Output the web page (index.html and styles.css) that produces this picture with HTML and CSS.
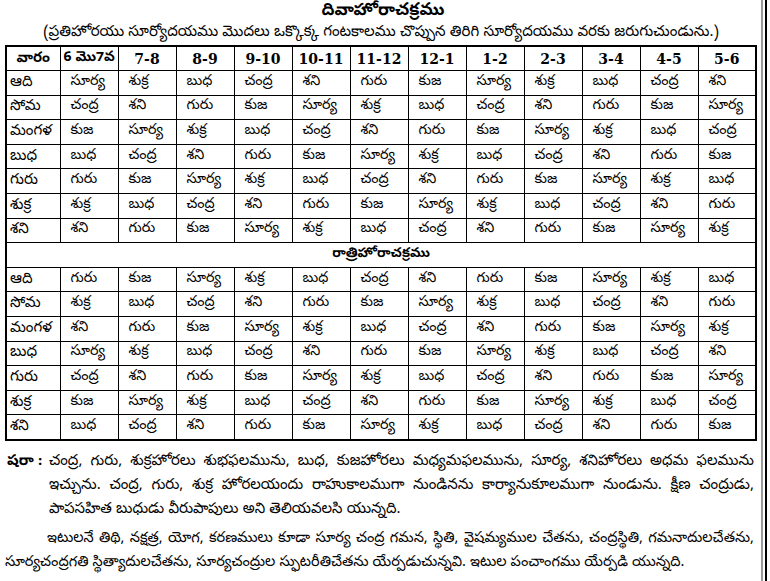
FILE: index.html
```html
<!DOCTYPE html>
<html lang="te">
<head>
<meta charset="utf-8">
<title>దివాహోరాచక్రము</title>
<link rel="stylesheet" href="styles.css">
</head>
<body>
<div class="frame">
<div class="page">
  <h1 class="title">దివాహోరాచక్రము</h1>
  <p class="subtitle">(ప్రతిహోరయు సూర్యోదయము మొదలు ఒక్కొక్క గంటకాలము చొప్పున తిరిగి సూర్యోదయము వరకు జరుగుచుండును.)</p>
  <table class="hora">
    <colgroup>
      <col class="c-day"><col><col><col><col><col><col><col><col><col><col><col><col>
    </colgroup>
    <tr class="head">
      <th class="day">వారం</th><th class="first">6 మొ7వ</th><th>7-8</th><th>8-9</th><th>9-10</th><th>10-11</th><th>11-12</th><th>12-1</th><th>1-2</th><th>2-3</th><th>3-4</th><th>4-5</th><th>5-6</th>
    </tr>
    <tr><td class="day">ఆది</td><td>సూర్య</td><td>శుక్ర</td><td>బుధ</td><td>చంద్ర</td><td>శని</td><td>గురు</td><td>కుజ</td><td>సూర్య</td><td>శుక్ర</td><td>బుధ</td><td>చంద్ర</td><td>శని</td></tr>
    <tr><td class="day">సోమ</td><td>చంద్ర</td><td>శని</td><td>గురు</td><td>కుజ</td><td>సూర్య</td><td>శుక్ర</td><td>బుధ</td><td>చంద్ర</td><td>శని</td><td>గురు</td><td>కుజ</td><td>సూర్య</td></tr>
    <tr><td class="day">మంగళ</td><td>కుజ</td><td>సూర్య</td><td>శుక్ర</td><td>బుధ</td><td>చంద్ర</td><td>శని</td><td>గురు</td><td>కుజ</td><td>సూర్య</td><td>శుక్ర</td><td>బుధ</td><td>చంద్ర</td></tr>
    <tr><td class="day">బుధ</td><td>బుధ</td><td>చంద్ర</td><td>శని</td><td>గురు</td><td>కుజ</td><td>సూర్య</td><td>శుక్ర</td><td>బుధ</td><td>చంద్ర</td><td>శని</td><td>గురు</td><td>కుజ</td></tr>
    <tr><td class="day">గురు</td><td>గురు</td><td>కుజ</td><td>సూర్య</td><td>శుక్ర</td><td>బుధ</td><td>చంద్ర</td><td>శని</td><td>గురు</td><td>కుజ</td><td>సూర్య</td><td>శుక్ర</td><td>బుధ</td></tr>
    <tr><td class="day">శుక్ర</td><td>శుక్ర</td><td>బుధ</td><td>చంద్ర</td><td>శని</td><td>గురు</td><td>కుజ</td><td>సూర్య</td><td>శుక్ర</td><td>బుధ</td><td>చంద్ర</td><td>శని</td><td>గురు</td></tr>
    <tr><td class="day">శని</td><td>శని</td><td>గురు</td><td>కుజ</td><td>సూర్య</td><td>శుక్ర</td><td>బుధ</td><td>చంద్ర</td><td>శని</td><td>గురు</td><td>కుజ</td><td>సూర్య</td><td>శుక్ర</td></tr>
    <tr class="section"><th colspan="13">రాత్రిహోరాచక్రము</th></tr>
    <tr><td class="day">ఆది</td><td>గురు</td><td>కుజ</td><td>సూర్య</td><td>శుక్ర</td><td>బుధ</td><td>చంద్ర</td><td>శని</td><td>గురు</td><td>కుజ</td><td>సూర్య</td><td>శుక్ర</td><td>బుధ</td></tr>
    <tr><td class="day">సోమ</td><td>శుక్ర</td><td>బుధ</td><td>చంద్ర</td><td>శని</td><td>గురు</td><td>కుజ</td><td>సూర్య</td><td>శుక్ర</td><td>బుధ</td><td>చంద్ర</td><td>శని</td><td>గురు</td></tr>
    <tr><td class="day">మంగళ</td><td>శని</td><td>గురు</td><td>కుజ</td><td>సూర్య</td><td>శుక్ర</td><td>బుధ</td><td>చంద్ర</td><td>శని</td><td>గురు</td><td>కుజ</td><td>సూర్య</td><td>శుక్ర</td></tr>
    <tr><td class="day">బుధ</td><td>సూర్య</td><td>శుక్ర</td><td>బుధ</td><td>చంద్ర</td><td>శని</td><td>గురు</td><td>కుజ</td><td>సూర్య</td><td>శుక్ర</td><td>బుధ</td><td>చంద్ర</td><td>శని</td></tr>
    <tr><td class="day">గురు</td><td>చంద్ర</td><td>శని</td><td>గురు</td><td>కుజ</td><td>సూర్య</td><td>శుక్ర</td><td>బుధ</td><td>చంద్ర</td><td>శని</td><td>గురు</td><td>కుజ</td><td>సూర్య</td></tr>
    <tr><td class="day">శుక్ర</td><td>కుజ</td><td>సూర్య</td><td>శుక్ర</td><td>బుధ</td><td>చంద్ర</td><td>శని</td><td>గురు</td><td>కుజ</td><td>సూర్య</td><td>శుక్ర</td><td>బుధ</td><td>చంద్ర</td></tr>
    <tr><td class="day">శని</td><td>బుధ</td><td>చంద్ర</td><td>శని</td><td>గురు</td><td>కుజ</td><td>సూర్య</td><td>శుక్ర</td><td>బుధ</td><td>చంద్ర</td><td>శని</td><td>గురు</td><td>కుజ</td></tr>
  </table>
  <div class="notes">
    <div class="note">
      <span class="label">షరా :</span>
      <p class="note-text">చంద్ర, గురు, శుక్రహోరలు శుభఫలమును, బుధ, కుజహోరలు మధ్యమఫలమును, సూర్య, శనిహోరలు అధమ ఫలమును ఇచ్చును. చంద్ర, గురు, శుక్ర హోరలయందు రాహుకాలముగా నుండినను కార్యానుకూలముగా నుండును. క్షీణ చంద్రుడు, పాపసహిత బుధుడు వీరుపాపులు అని తెలియవలసి యున్నది.</p>
    </div>
    <p class="para">ఇటులనే తిథి, నక్షత్ర, యోగ, కరణములు కూడా సూర్య చంద్ర గమన, స్థితి, వైషమ్యముల చేతను, చంద్రస్థితి, గమనాదులచేతను, సూర్యచంద్రగతి స్థిత్యాదులచేతను, సూర్యచంద్రుల స్ఫుటరీతిచేతను యేర్పడుచున్నవి. ఇటుల పంచాంగము యేర్పడి యున్నది.</p>
  </div>
</div>
</div>
</body>
</html>
```

FILE: styles.css
```css
html, body {
  margin: 0;
  padding: 0;
  background: #fff;
}
body {
  font-family: "Noto Sans Telugu", "Noto Serif Telugu", "Lohit Telugu", "Gurajada", "Pothana2000", "Noto Sans", sans-serif;
  color: #000;
  font-size: 14px;
}
.frame {
  width: 765px;
  height: 581px;
  border-right: 2px solid #000;
  overflow: hidden;
}
.page {
  width: 763px;
  height: 581px;
  border-right: 2px solid #9a9a9a;
  box-sizing: border-box;
  padding: 0 4px 0 5px;
}
.title {
  margin: 0;
  height: 24px;
  line-height: 24px;
  font-size: 17px;
  font-weight: bold;
  text-align: center;
  padding-left: 4px;
}
.subtitle {
  margin: 0;
  height: 21px;
  line-height: 18px;
  font-size: 15px;
  text-align: center;
  white-space: nowrap;
}
.hora {
  width: 752px;
  border-collapse: collapse;
  border: 2px solid #000;
  table-layout: fixed;
}
.hora col { width: 58px; }
.hora col.c-day { width: 54px; }
.hora tr { height: 24.6px; }
.hora td, .hora th {
  border: 1px solid #000;
  padding: 0 0 0 10px;
  text-align: left;
  white-space: nowrap;
  overflow: hidden;
  font-size: 14.3px;
  font-weight: normal;
  line-height: 20px;
}
.hora td.day { padding-left: 3px; font-size: 15px; }
.head th {
  font-family: "DejaVu Serif", "Noto Sans Telugu", serif;
  font-weight: bold;
  font-size: 14px;
  text-align: center;
  padding: 0;
}
.head th.day {
  font-family: "Noto Sans Telugu", "DejaVu Serif", sans-serif;
  font-size: 14.5px;
}
.head th.first {
  text-align: left;
  padding-left: 3px;
  font-family: "Noto Sans Telugu", "DejaVu Serif", sans-serif;
  font-size: 14px;
}
.section th {
  text-align: center;
  font-weight: bold;
  font-size: 13.5px;
  padding: 0;
}
.notes {
  padding-top: 9px;
  padding-right: 3px;
}
.note {
  display: flex;
  align-items: flex-start;
}
.label {
  width: 42px;
  flex: none;
  font-weight: bold;
  font-size: 15px;
  line-height: 24px;
  padding-left: 2px;
}
.note-text, .para {
  margin: 0;
  font-size: 14.9px;
  line-height: 24px;
  text-align: justify;
}
.note-text { flex: 1; }
.para {
  margin-top: 5px;
  text-indent: 42px;
  font-size: 14.5px;
}
```
